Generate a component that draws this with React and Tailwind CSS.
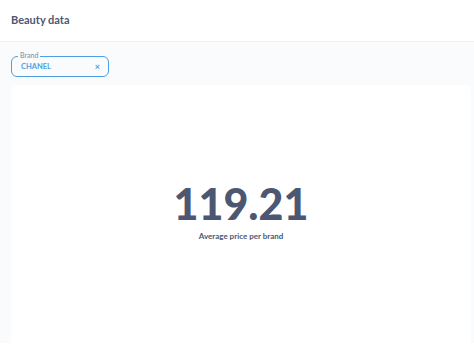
export default function App() {
  return (
    <div className="w-[474px] h-[346px] bg-white flex flex-col overflow-hidden" style={{ fontFamily: 'Lato, "Noto Sans", sans-serif' }}>
      <div className="h-[42px] shrink-0 border-b border-[#eef0f2] flex items-center px-[11px]">
        <span className="text-[11px] font-bold text-[#4c5773]">Beauty data</span>
      </div>
      <div className="flex-1 bg-[#f9fbfc] flex flex-col pl-[11px] pr-[3px] pt-[14px] mb-[3px]">
        <div className="relative w-[98px] h-[21px] border-[1.5px] border-[#509ee3] rounded-[6px] flex items-center justify-between pl-[9px] pr-[8px] bg-[#f9fbfc]">
          <span className="absolute -top-[7px] left-[6px] px-[2px] bg-[#f9fbfc] text-[7px] leading-[10px] text-[#949aab] font-semibold">Brand</span>
          <span className="text-[7.5px] font-bold text-[#509ee3]">CHANEL</span>
          <span className="text-[9px] font-bold text-[#509ee3] leading-none">×</span>
        </div>
        <div className="mt-[8px] flex-1 bg-white rounded-t-[6px] flex flex-col items-center justify-center pb-[4px]">
          <div className="text-[43px] leading-[43px] font-black text-[#4c5773]">119.21</div>
          <div className="mt-[5px] text-[8px] font-bold text-[#4c5773]">Average price per brand</div>
        </div>
      </div>
    </div>
  );
}
